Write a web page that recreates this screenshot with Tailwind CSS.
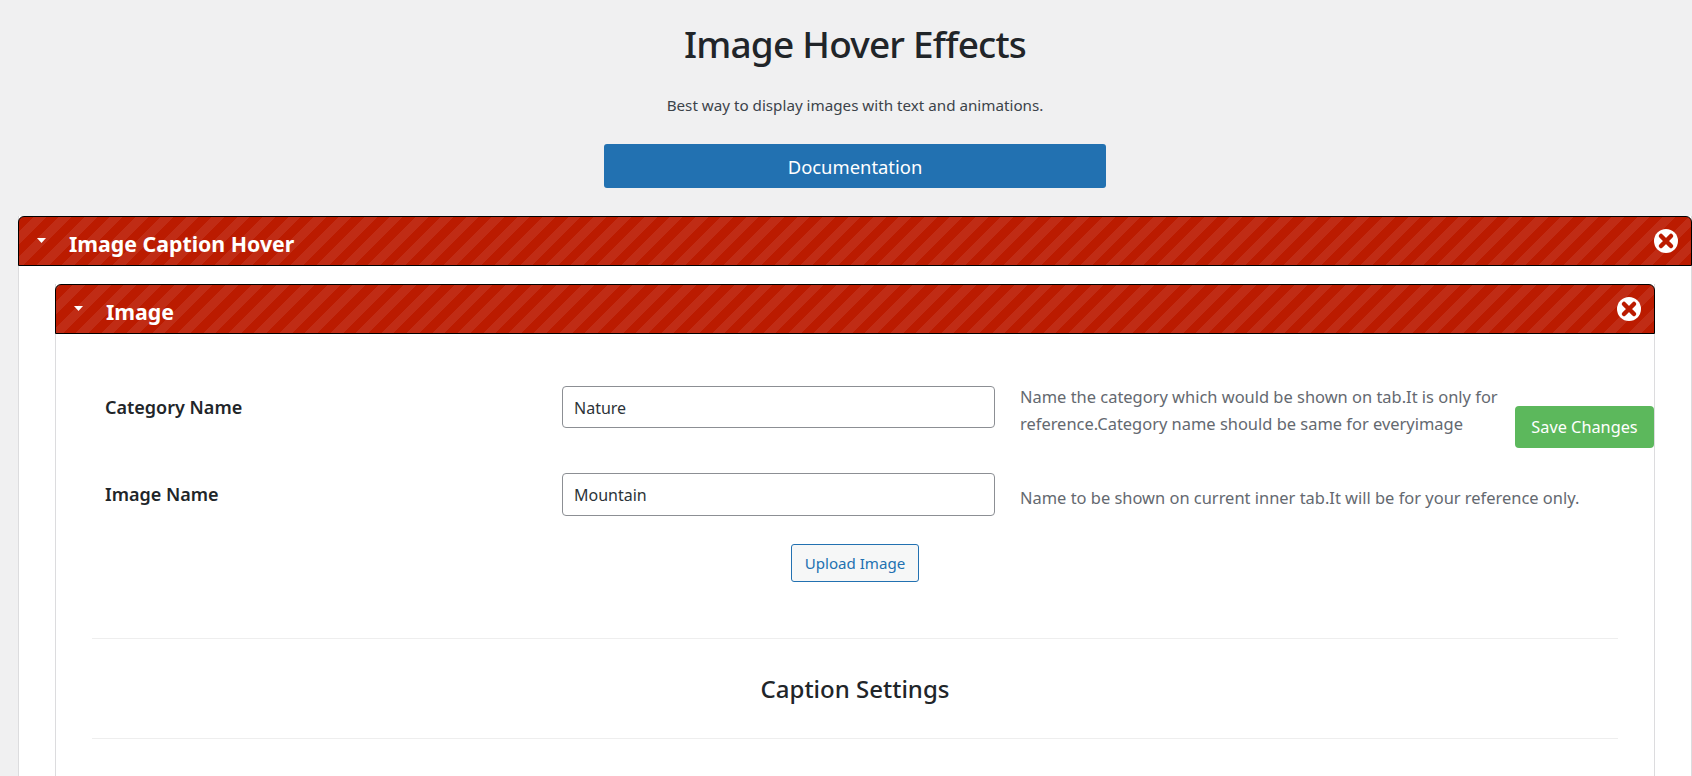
<!DOCTYPE html>
<html lang="en">
<head>
  <meta charset="UTF-8">
  <title>Image Hover Effects</title>
  <script src="https://cdn.jsdelivr.net/npm/@tailwindcss/browser@4"></script>
</head>
<body class="bg-[#f0f0f1] font-['Noto_Sans','Open_Sans',sans-serif] text-[#212529]">
  <div class="h-[776px] overflow-hidden">
    <!-- Page header -->
    <div class="pl-[18px] flex flex-col items-center">
      <h1 class="mt-[20px] h-[48px] text-[37px] leading-[48px] tracking-[-0.8px] font-medium">Image Hover Effects</h1>
      <p class="mt-[25px] h-[24px] text-[15.200px] leading-[24px] text-[#3c434a]">Best way to display images with text and animations.</p>
      <a class="mt-[27px] w-[502px] h-[44px] flex items-center justify-center rounded-[3px] bg-[#2271b1] text-white text-[18.400px]"><span class="mt-[2px]">Documentation</span></a>
    </div>

    <!-- Outer accordion -->
    <div class="ml-[18px] mt-[28px] mr-0 border-x border-[#dcdcde] bg-white h-[600px]">
      <div class="-mx-px h-[50px] flex items-center border border-black rounded-t-[6px] text-white bg-[repeating-linear-gradient(-45deg,#bb1b00_0,#bb1b00_9px,#c02c15_9px,#c02c15_18px)]">
        <svg class="ml-[18px] -mt-[1px] w-[9px] h-[5px]" viewBox="0 0 9 5"><path d="M0 0h9L4.500 5z" fill="#fff"/></svg>
        <h2 class="ml-[23px] mt-[5px] text-[21.300px] font-bold">Image Caption Hover</h2>
        <svg class="ml-auto mr-[13px] w-[24px] h-[24px]" viewBox="0 0 24 24">
          <circle cx="12" cy="12" r="12" fill="#fff"/>
          <path d="M7 7l10 10M17 7L7 17" stroke="#bb1b00" stroke-width="4.500" stroke-linecap="round"/>
        </svg>
      </div>

      <!-- Inner accordion -->
      <div class="ml-[36px] mr-[36px] mt-[18px] border-x border-[#dcdcde] h-[520px]">
        <div class="-mx-px h-[50px] flex items-center border border-black rounded-t-[6px] text-white bg-[repeating-linear-gradient(-45deg,#bb1b00_0,#bb1b00_9px,#c02c15_9px,#c02c15_18px)]">
          <svg class="ml-[18px] -mt-[1px] w-[9px] h-[5px]" viewBox="0 0 9 5"><path d="M0 0h9L4.500 5z" fill="#fff"/></svg>
          <h3 class="ml-[23px] mt-[5px] text-[21.300px] font-bold">Image</h3>
          <svg class="ml-auto mr-[13px] w-[24px] h-[24px]" viewBox="0 0 24 24">
            <circle cx="12" cy="12" r="12" fill="#fff"/>
            <path d="M7 7l10 10M17 7L7 17" stroke="#bb1b00" stroke-width="4.500" stroke-linecap="round"/>
          </svg>
        </div>

        <div class="px-[36px]">
          <!-- Category row -->
          <div class="mt-[52px] flex items-start pl-[13px]">
            <label class="w-[457px] h-[42px] flex items-center text-[18px] font-semibold">Category Name</label>
            <input type="text" value="Nature" class="w-[433px] h-[42px] px-[11px] pt-[2px] border border-[#8c8f94] rounded-[4px] bg-white text-[16px] text-[#2c3338]">
            <p class="ml-[25px] w-[490px] -mt-[3px] text-[16.450px] leading-[27px] text-[#646970]">Name the category which would be shown on tab.It is only for reference.Category name should be same for everyimage</p>
            <button class="ml-auto -mr-[36px] mt-[20px] w-[139px] h-[42px] pt-[1px] shrink-0 rounded-[4px] bg-[#5cb85c] text-white text-[16.300px]">Save Changes</button>
          </div>

          <!-- Name row -->
          <div class="mt-[25px] flex items-center pl-[13px]">
            <label class="w-[457px] h-[42px] flex items-center text-[18px] font-semibold">Image Name</label>
            <input type="text" value="Mountain" class="w-[433px] h-[43px] px-[11px] pt-[1px] border border-[#8c8f94] rounded-[4px] bg-white text-[16px] text-[#2c3338]">
            <p class="ml-[25px] mt-[8px] text-[16.450px] text-[#646970]">Name to be shown on current inner tab.It will be for your reference only.</p>
          </div>

          <div class="mt-[28px] flex justify-center">
            <button class="w-[128px] h-[38px] pt-[1px] border border-[#2271b1] rounded-[3px] bg-[#f6f7f7] text-[#2271b1] text-[15.100px]">Upload Image</button>
          </div>

          <hr class="mt-[56px] border-t border-[#eeeeee]">
          <h2 class="h-[99px] flex items-center justify-center text-[24px] font-medium">Caption Settings</h2>
          <hr class="border-t border-[#eeeeee]">
        </div>
      </div>
    </div>
  </div>
</body>
</html>
